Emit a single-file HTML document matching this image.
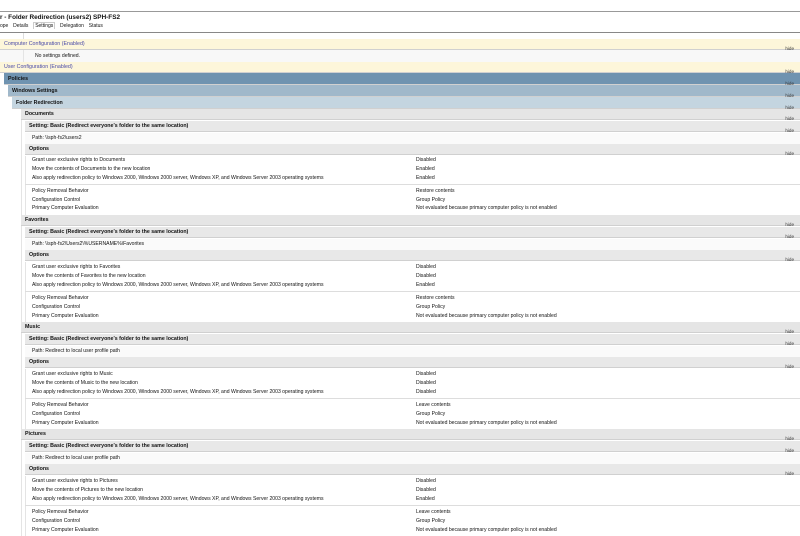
<!DOCTYPE html>
<html><head><meta charset="utf-8"><style>
*{margin:0;padding:0;box-sizing:border-box}
body{width:800px;height:531px;overflow:hidden;background:#fff;font-family:"Liberation Sans",Arial,sans-serif;font-size:5px;color:#111;position:relative}
.a{position:absolute}
.band{position:absolute;right:0;height:11px;line-height:11px;padding-left:4px;font-weight:bold;font-size:5.3px;border-bottom:1px solid #d0d0d0}
.hide{position:absolute;right:6px;bottom:-2px;font-weight:normal;font-size:4.6px;line-height:5px;color:#333}
.blk{position:absolute;left:21px;right:0;height:107px;border-left:1px solid #e4e4e4}
.t{position:absolute;left:10px;font-size:5.1px;line-height:6px}
.v{position:absolute;left:394px;font-size:5.1px;line-height:6px}
</style></head><body>
<div class="a" style="left:0;top:11px;width:800px;height:1px;background:#999"></div>
<div class="a" style="left:0;top:14px;font-weight:bold;font-size:6.4px;line-height:7px">r - Folder Redirection (users2) SPH-FS2</div>
<div class="a" style="left:0;top:23px;font-size:5px;line-height:6px;word-spacing:1px">ope&nbsp; Details&nbsp; <span style="border:1px solid #ccc;border-bottom:none;padding:0 1px">Settings</span>&nbsp; Delegation&nbsp; Status</div>
<div class="a" style="left:0;top:32px;width:800px;height:1px;background:#888"></div>
<div class="a" style="left:23px;top:33px;width:1px;height:6px;background:#ddd"></div>

<div class="band" style="left:0;top:39px;background:#fdf6da;color:#4a4aa8;font-weight:normal">Computer Configuration (Enabled)<span class="hide">hide</span></div>
<div class="a" style="left:0;top:50px;width:800px;height:12px;background:#f8f8f8"></div>
<div class="a" style="left:23px;top:50px;width:1px;height:12px;background:#e4e4e4"></div>
<div class="a" style="left:35px;top:53px;font-size:5.1px">No settings defined.</div>
<div class="band" style="left:0;top:62px;background:#fdf6da;color:#4a4aa8;font-weight:normal">User Configuration (Enabled)<span class="hide">hide</span></div>
<div class="band" style="left:4px;top:73px;background:#6f93b0;height:12px;line-height:12px">Policies<span class="hide">hide</span></div>
<div class="band" style="left:8px;top:85px;background:#a0b8ca;height:12px;line-height:12px">Windows Settings<span class="hide">hide</span></div>
<div class="band" style="left:12px;top:97px;background:#c4d5e0;height:12px;line-height:12px">Folder Redirection<span class="hide">hide</span></div>

<!-- Documents -->
<div class="blk" style="top:109px">
<div class="band" style="left:-1px;top:0;background:#e5e5e5">Documents<span class="hide">hide</span></div>
<div class="band" style="left:3px;top:12px;background:#e8e8e8">Setting: Basic (Redirect everyone's folder to the same location)<span class="hide">hide</span></div>
<div class="a" style="left:3px;right:0;top:24px;height:11px;background:#fafafa"></div>
<div class="t" style="top:26px">Path: \\sph-fs2\users2</div>
<div class="band" style="left:3px;top:35px;background:#e8e8e8">Options<span class="hide">hide</span></div>
<div class="a" style="left:3px;top:47px;width:1px;height:60px;background:#e4e4e4"></div>
<div class="t" style="top:48px">Grant user exclusive rights to Documents</div><div class="v" style="top:48px">Disabled</div>
<div class="t" style="top:57px">Move the contents of Documents to the new location</div><div class="v" style="top:57px">Enabled</div>
<div class="t" style="top:66px">Also apply redirection policy to Windows 2000, Windows 2000 server, Windows XP, and Windows Server 2003 operating systems</div><div class="v" style="top:66px">Enabled</div>
<div class="a" style="left:3px;right:0;top:75px;height:1px;background:#ddd"></div>
<div class="t" style="top:79px">Policy Removal Behavior</div><div class="v" style="top:79px">Restore contents</div>
<div class="t" style="top:88px">Configuration Control</div><div class="v" style="top:88px">Group Policy</div>
<div class="t" style="top:96px">Primary Computer Evaluation</div><div class="v" style="top:96px">Not evaluated because primary computer policy is not enabled</div>
</div>

<!-- Favorites -->
<div class="blk" style="top:215px">
<div class="band" style="left:-1px;top:0;background:#e5e5e5">Favorites<span class="hide">hide</span></div>
<div class="band" style="left:3px;top:12px;background:#e8e8e8">Setting: Basic (Redirect everyone's folder to the same location)<span class="hide">hide</span></div>
<div class="a" style="left:3px;right:0;top:24px;height:11px;background:#fafafa"></div>
<div class="t" style="top:26px">Path: \\sph-fs2\Users2\%USERNAME%\Favorites</div>
<div class="band" style="left:3px;top:35px;background:#e8e8e8">Options<span class="hide">hide</span></div>
<div class="a" style="left:3px;top:47px;width:1px;height:60px;background:#e4e4e4"></div>
<div class="t" style="top:49px">Grant user exclusive rights to Favorites</div><div class="v" style="top:49px">Disabled</div>
<div class="t" style="top:58px">Move the contents of Favorites to the new location</div><div class="v" style="top:58px">Disabled</div>
<div class="t" style="top:67px">Also apply redirection policy to Windows 2000, Windows 2000 server, Windows XP, and Windows Server 2003 operating systems</div><div class="v" style="top:67px">Enabled</div>
<div class="a" style="left:3px;right:0;top:76px;height:1px;background:#ddd"></div>
<div class="t" style="top:80px">Policy Removal Behavior</div><div class="v" style="top:80px">Restore contents</div>
<div class="t" style="top:89px">Configuration Control</div><div class="v" style="top:89px">Group Policy</div>
<div class="t" style="top:98px">Primary Computer Evaluation</div><div class="v" style="top:98px">Not evaluated because primary computer policy is not enabled</div>
</div>

<!-- Music -->
<div class="blk" style="top:322px">
<div class="band" style="left:-1px;top:0;background:#e5e5e5">Music<span class="hide">hide</span></div>
<div class="band" style="left:3px;top:12px;background:#e8e8e8">Setting: Basic (Redirect everyone's folder to the same location)<span class="hide">hide</span></div>
<div class="a" style="left:3px;right:0;top:24px;height:11px;background:#fafafa"></div>
<div class="t" style="top:26px">Path: Redirect to local user profile path</div>
<div class="band" style="left:3px;top:35px;background:#e8e8e8">Options<span class="hide">hide</span></div>
<div class="a" style="left:3px;top:47px;width:1px;height:60px;background:#e4e4e4"></div>
<div class="t" style="top:49px">Grant user exclusive rights to Music</div><div class="v" style="top:49px">Disabled</div>
<div class="t" style="top:58px">Move the contents of Music to the new location</div><div class="v" style="top:58px">Disabled</div>
<div class="t" style="top:67px">Also apply redirection policy to Windows 2000, Windows 2000 server, Windows XP, and Windows Server 2003 operating systems</div><div class="v" style="top:67px">Disabled</div>
<div class="a" style="left:3px;right:0;top:76px;height:1px;background:#ddd"></div>
<div class="t" style="top:80px">Policy Removal Behavior</div><div class="v" style="top:80px">Leave contents</div>
<div class="t" style="top:89px">Configuration Control</div><div class="v" style="top:89px">Group Policy</div>
<div class="t" style="top:98px">Primary Computer Evaluation</div><div class="v" style="top:98px">Not evaluated because primary computer policy is not enabled</div>
</div>

<!-- Pictures -->
<div class="blk" style="top:429px">
<div class="band" style="left:-1px;top:0;background:#e5e5e5">Pictures<span class="hide">hide</span></div>
<div class="band" style="left:3px;top:12px;background:#e8e8e8">Setting: Basic (Redirect everyone's folder to the same location)<span class="hide">hide</span></div>
<div class="a" style="left:3px;right:0;top:24px;height:11px;background:#fafafa"></div>
<div class="t" style="top:26px">Path: Redirect to local user profile path</div>
<div class="band" style="left:3px;top:35px;background:#e8e8e8">Options<span class="hide">hide</span></div>
<div class="a" style="left:3px;top:47px;width:1px;height:60px;background:#e4e4e4"></div>
<div class="t" style="top:49px">Grant user exclusive rights to Pictures</div><div class="v" style="top:49px">Disabled</div>
<div class="t" style="top:58px">Move the contents of Pictures to the new location</div><div class="v" style="top:58px">Disabled</div>
<div class="t" style="top:67px">Also apply redirection policy to Windows 2000, Windows 2000 server, Windows XP, and Windows Server 2003 operating systems</div><div class="v" style="top:67px">Enabled</div>
<div class="a" style="left:3px;right:0;top:76px;height:1px;background:#ddd"></div>
<div class="t" style="top:80px">Policy Removal Behavior</div><div class="v" style="top:80px">Leave contents</div>
<div class="t" style="top:89px">Configuration Control</div><div class="v" style="top:89px">Group Policy</div>
<div class="t" style="top:98px">Primary Computer Evaluation</div><div class="v" style="top:98px">Not evaluated because primary computer policy is not enabled</div>
</div>
</body></html>
